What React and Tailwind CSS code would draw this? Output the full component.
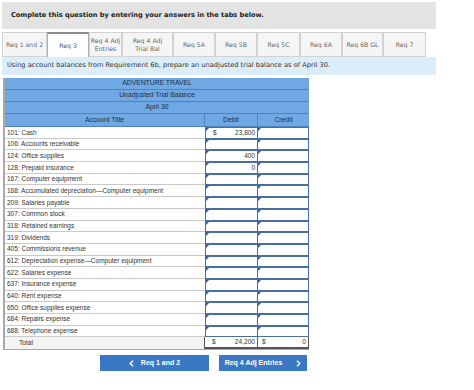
import React from "react";

const tabs = [
  { w: 45, l: ["Req 1 and 2"] },
  { w: 42, l: ["Req 3"], active: true },
  { w: 33, l: ["Req 4 Adj", "Entries"] },
  { w: 51, l: ["Req 4 Adj", "Trial Bal"] },
  { w: 42, l: ["Req 5A"] },
  { w: 42, l: ["Req 5B"] },
  { w: 43, l: ["Req 5C"] },
  { w: 42, l: ["Req 6A"] },
  { w: 41, l: ["Req 6B GL"] },
  { w: 43, l: ["Req 7"] },
];

const rows = [
  ["101: Cash", "23,800", true],
  ["106: Accounts receivable", ""],
  ["124: Office supplies", "400"],
  ["128: Prepaid insurance", "0"],
  ["167: Computer equipment", ""],
  ["168: Accumulated depreciation\u2014Computer equipment", ""],
  ["209: Salaries payable", ""],
  ["307: Common stock", ""],
  ["318: Retained earnings", ""],
  ["319: Dividends", ""],
  ["405: Commissions revenue", ""],
  ["612: Depreciation expense\u2014Computer equipment", ""],
  ["622: Salaries expense", ""],
  ["637: Insurance expense", ""],
  ["640: Rent expense", ""],
  ["650: Office supplies expense", ""],
  ["684: Repairs expense", ""],
  ["688: Telephone expense", ""],
];

function Mark() {
  return (
    <span className="absolute left-0 top-0 w-0 h-0 border-t-[3px] border-r-[3px] border-t-[#2a5fa8] border-r-transparent" />
  );
}

export default function App() {
  const verd = { fontFamily: '"DejaVu Sans", Verdana, sans-serif' };
  const arial = { fontFamily: '"Liberation Sans", Arial, sans-serif' };
  return (
    <div className="w-[474px] h-[390px] bg-white overflow-hidden pt-[2px] pl-[2px]">
      <div className="w-[434px] h-[27px] bg-[#e3e3e3] flex items-center pl-[9px]">
        <span className="text-[6.6px] font-bold text-[#222]" style={verd}>
          Complete this question by entering your answers in the tabs below.
        </span>
      </div>
      <div className="flex h-[25px] mt-[3px]">
        {tabs.map((t, i) => (
          <div
            key={i}
            className={
              "flex flex-col items-center justify-center leading-[7.5px] text-[6.2px] " +
              (t.active
                ? "bg-white border border-[#b0b0b0] border-t-[2px] border-t-[#8c8c8c] border-b-0 text-[#555]"
                : "bg-[#f5f5f5] border border-[#d2d2d2] text-[#666]")
            }
            style={{ width: t.w, ...verd }}
          >
            {t.l.map((s, j) => (
              <span key={j}>{s}</span>
            ))}
          </div>
        ))}
      </div>
      <div className="w-[434px] h-[18px] bg-[#dcedfa] flex items-center pl-[5px]">
        <span className="text-[6.65px] text-[#333]" style={verd}>
          Using account balances from Requirement 6b, prepare an unadjusted trial balance as of April 30.
        </span>
      </div>

      <div className="ml-[1px] mt-[3px] w-[306px] border-l-[2px] border-[#a8a8a8]" style={arial}>
        {["ADVENTURE TRAVEL", "Unadjusted Trial Balance", "April 30"].map((s) => (
          <div
            key={s}
            className="h-[12px] bg-[#6fa8e2] border-b border-[#4d83c0] flex items-center justify-center text-[6.8px] text-[#1d2f50]"
          >
            {s}
          </div>
        ))}
        <div className="grid grid-cols-[200px_53px_51px] h-[13px] bg-[#6fa8e2] border-b border-[#4d83c0] text-[6.8px] text-[#1d2f50]">
          <div className="flex items-center justify-center border-r border-[#4d83c0]">Account Title</div>
          <div className="flex items-center justify-center border-r border-[#4d83c0]">Debit</div>
          <div className="flex items-center justify-center">Credit</div>
        </div>
        {rows.map(([name, val, dollar], i) => (
          <div key={i} className="grid grid-cols-[200px_53px_51px] h-[11.7px] text-[6.5px] text-[#333]">
            <div className="flex items-center pl-[2px] border-b border-[#c9c9c9] bg-white">{name}</div>
            <div className="relative flex items-center justify-between px-[2px] pl-[7px] border border-[#4a6e9e] bg-white">
              <Mark />
              <span>{dollar ? "$" : ""}</span>
              <span>{val}</span>
            </div>
            <div className="relative border border-l-0 border-[#4a6e9e] bg-white">
              <Mark />
            </div>
          </div>
        ))}
        <div className="grid grid-cols-[200px_53px_51px] h-[13px] text-[6.6px] text-[#333] border-b border-[#a8a8a8]">
          <div className="flex items-center pl-[14px] bg-[#f4f4f4] border-r border-[#555]">Total</div>
          <div className="flex items-center justify-between pl-[7px] pr-[2px] border-r border-b-[2px] border-[#555]">
            <span>$</span>
            <span>24,200</span>
          </div>
          <div className="flex items-center justify-between pl-[4px] pr-[2px] border-r border-b-[2px] border-[#555]">
            <span>$</span>
            <span>0</span>
          </div>
        </div>
      </div>

      <div className="flex mt-[5px] ml-[98px] gap-[10px]" style={arial}>
        <div className="w-[109px] h-[16px] bg-[#3b78c4] flex items-center justify-center gap-[7px] text-white text-[7px] font-bold">
          <svg width="5" height="7" viewBox="0 0 5 7">
            <path d="M4 0.8 L1.2 3.5 L4 6.2" stroke="white" strokeWidth="1.4" fill="none" />
          </svg>
          <span>Req 1 and 2</span>
        </div>
        <div className="w-[88px] h-[16px] bg-[#3b78c4] flex items-center justify-center gap-[14px] text-white text-[7px] font-bold">
          <span>Req 4 Adj Entries</span>
          <svg width="5" height="7" viewBox="0 0 5 7">
            <path d="M1 0.8 L3.8 3.5 L1 6.2" stroke="white" strokeWidth="1.4" fill="none" />
          </svg>
        </div>
      </div>
    </div>
  );
}
